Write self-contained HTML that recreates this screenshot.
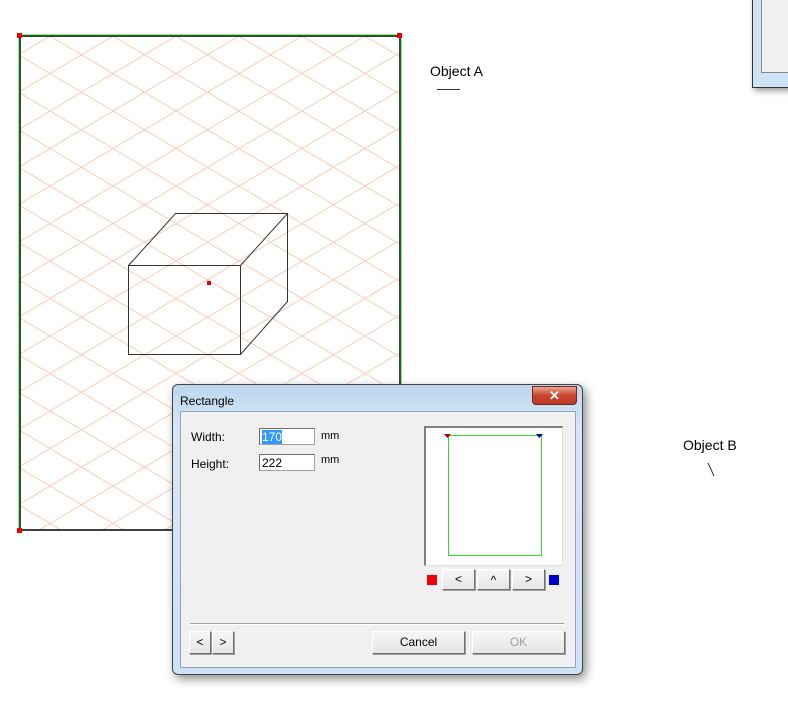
<!DOCTYPE html>
<html><head><meta charset="utf-8"><style>
body{margin:0;width:788px;height:708px;background:#fff;position:relative;overflow:hidden;font-family:"Liberation Sans",sans-serif;}
.abs{position:absolute}
.btn{position:absolute;background:linear-gradient(#f6f6f6,#e6e6e6);border:1px solid #fff;border-right-color:#707070;border-bottom-color:#707070;box-shadow:1px 1px 0 #a0a0a0;font-size:12px;text-align:center;color:#000;box-sizing:border-box;}
.edit{position:absolute;background:#fff;border:1px solid #a0a0a0;border-top-color:#707070;border-left-color:#707070;height:17px;width:56px;font-size:12px;line-height:17px;padding-left:2px;box-sizing:border-box}
.lbl{position:absolute;font-size:12px;color:#000}
</style></head><body>
<svg class="abs" style="left:0;top:0" width="788" height="708">
<defs>
<pattern id="g" patternUnits="userSpaceOnUse" x="50" y="36" width="63" height="37.5">
<line x1="0" y1="0" x2="63" y2="37.5" stroke="#f6cfba" stroke-width="1"/>
<line x1="0" y1="37.5" x2="63" y2="0" stroke="#f6cfba" stroke-width="1"/>
</pattern>
</defs>
<rect x="20" y="36" width="380" height="494" fill="url(#g)"/>
<rect x="20" y="36" width="380" height="494" fill="none" stroke="#000" stroke-width="1.5"/>
<line x1="19" y1="35" x2="401" y2="35" stroke="#3c3" stroke-width="1"/>
<line x1="19" y1="35" x2="19" y2="531" stroke="#3c3" stroke-width="1"/>
<line x1="401" y1="35" x2="401" y2="531" stroke="#3c3" stroke-width="1"/>
<rect x="17" y="33" width="5" height="5" fill="#e00"/>
<rect x="397" y="33" width="5" height="5" fill="#e00"/>
<rect x="17" y="528" width="5" height="5" fill="#e00"/>
<g fill="none" stroke="#333" stroke-width="1">
<rect x="128.5" y="265.5" width="112" height="89"/>
<polyline points="128.5,265.5 175.5,213.5 287.5,213.5 287.5,301.5 240.5,354.5"/>
<line x1="240.5" y1="265.5" x2="287.5" y2="213.5"/>
</g>
<rect x="207" y="281" width="4" height="4" fill="#d00"/>
<line x1="437" y1="89.5" x2="460" y2="89.5" stroke="#333"/>
<line x1="708" y1="463" x2="714" y2="476" stroke="#333"/>
</svg>
<div class="lbl" style="left:430px;top:63px;font-size:14px">Object A</div>
<div class="lbl" style="left:683px;top:437px;font-size:14px">Object B</div>
<div class="abs" style="left:752px;top:-10px;width:50px;height:96px;background:#cfe3f7;border:1px solid #333;box-shadow:2px 3px 6px rgba(0,0,0,.4)"><div class="abs" style="left:8px;top:0;width:50px;height:80px;background:#f0f0f0;border:1px solid #888"></div></div>
<div class="abs" style="left:172px;top:384px;width:411px;height:291px;border-radius:6px;background:linear-gradient(#bcd6ee,#d5e6f6 40px,#cfe2f4);border:1px solid #444;box-shadow:3px 4px 10px rgba(0,0,0,.45);box-sizing:border-box">
<div class="lbl" style="left:7px;top:9px;font-size:12px">Rectangle</div>
<div class="abs" style="left:359px;top:1px;width:45px;height:19px;border-radius:0 0 4px 4px;background:linear-gradient(#e8a493,#c9462d 50%,#c0382a);border:1px solid #6b2a1e;box-sizing:border-box;color:#fff;font-size:13px;font-weight:bold;text-align:center;line-height:17px">✕</div>
<div class="abs" style="left:7px;top:26px;width:396px;height:257px;background:#f0f0f0;border:1px solid #8aa4bf;box-sizing:border-box"></div>
</div>
<div class="lbl" style="left:191px;top:430px">Width:</div>
<div class="lbl" style="left:191px;top:457px">Height:</div>
<div class="edit" style="left:259px;top:428px"><span style="background:#3399ff;color:#fff">170</span></div>
<div class="edit" style="left:259px;top:454px">222</div>
<div class="lbl" style="left:321px;top:430px;font-size:11px">mm</div>
<div class="lbl" style="left:321px;top:454px;font-size:11px">mm</div>
<div class="abs" style="left:424px;top:426px;width:139px;height:140px;background:#fff;border-top:2px solid #808080;border-left:2px solid #808080;border-right:1px solid #e0e0e0;border-bottom:1px solid #e0e0e0;box-sizing:border-box"></div>
<div class="abs" style="left:448px;top:435px;width:94px;height:121px;border:1px solid #33dd33;box-sizing:border-box"></div>
<svg class="abs" style="left:444px;top:434px" width="100" height="6"><polygon points="0,0 7,0 3.5,4" fill="#a00"/><polygon points="92,0 99,0 95.5,4" fill="#00a"/></svg>
<div class="abs" style="left:427px;top:575px;width:10px;height:10px;background:#e00"></div>
<div class="abs" style="left:549px;top:575px;width:10px;height:10px;background:#00c"></div>
<div class="btn" style="left:442px;top:569px;width:33px;height:21px;line-height:19px">&lt;</div>
<div class="btn" style="left:477px;top:569px;width:33px;height:21px;line-height:21px">^</div>
<div class="btn" style="left:512px;top:569px;width:33px;height:21px;line-height:19px">&gt;</div>
<div class="abs" style="left:190px;top:623px;width:374px;height:1px;background:#a0a0a0;border-bottom:1px solid #fff"></div>
<div class="btn" style="left:189px;top:631px;width:22px;height:23px;line-height:21px">&lt;</div>
<div class="btn" style="left:212px;top:631px;width:22px;height:23px;line-height:21px">&gt;</div>
<div class="btn" style="left:372px;top:631px;width:93px;height:23px;line-height:21px">Cancel</div>
<div class="btn" style="left:472px;top:631px;width:93px;height:23px;line-height:21px;color:#a0a0a0">OK</div>
</body></html>
